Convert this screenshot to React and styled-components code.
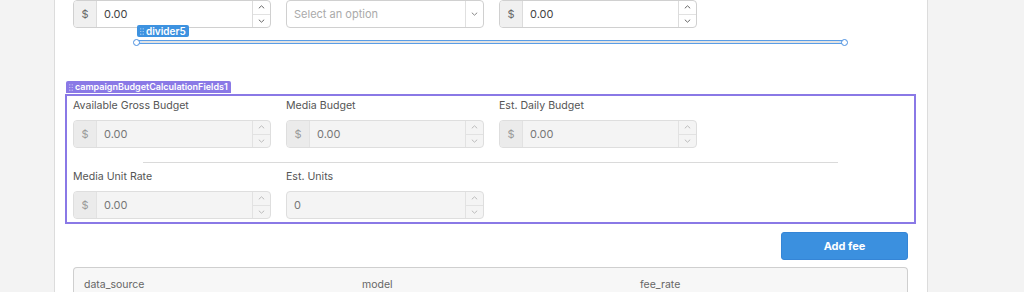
import React from 'react';
import styled, { createGlobalStyle } from 'styled-components';

const GlobalStyle = createGlobalStyle`
  html, body {
    margin: 0;
    padding: 0;
    background: #f3f3f3;
    font-family: Inter, "Noto Sans", sans-serif;
    overflow: hidden;
  }
`;

const Page = styled.div`
  display: flex;
  height: 292px;
  overflow: hidden;
`;

const Gutter = styled.div`
  width: 54px;
  flex-shrink: 0;
  background: #f3f3f3;
`;

const Canvas = styled.div`
  width: 872px;
  flex-shrink: 0;
  background: #fff;
  border-left: 1px solid #dcdcdc;
  border-right: 1px solid #dcdcdc;
  display: flex;
  flex-direction: column;
`;

const FieldRow = styled.div`
  display: grid;
  grid-template-columns: repeat(3, 198px);
  column-gap: 15px;
  margin-top: ${({ $top }) => $top || 0}px;
  padding-left: ${({ $indent }) => $indent || 0}px;
`;

const Field = styled.div`
  display: flex;
  flex-direction: column;
`;

const Label = styled.div`
  font-size: 10.6px;
  line-height: 14px;
  color: #555;
  margin-bottom: 7px;
  white-space: nowrap;
`;

const InputBox = styled.div`
  height: 28px;
  box-sizing: border-box;
  display: flex;
  border: 1px solid ${({ $disabled }) => ($disabled ? '#dedede' : '#d0d0d0')};
  border-radius: 4px;
  background: ${({ $disabled }) => ($disabled ? '#f4f4f4' : '#fff')};
  overflow: hidden;
`;

const Prefix = styled.div`
  width: 22px;
  flex-shrink: 0;
  display: flex;
  align-items: center;
  justify-content: center;
  background: ${({ $disabled }) => ($disabled ? '#ebebeb' : '#f0f0f0')};
  border-right: 1px solid ${({ $disabled }) => ($disabled ? '#e2e2e2' : '#dcdcdc')};
  font-size: 11px;
  color: ${({ $disabled }) => ($disabled ? '#999' : '#666')};
`;

const Value = styled.div`
  flex: 1;
  display: flex;
  align-items: center;
  padding-left: ${({ $pad }) => $pad || 7}px;
  font-size: 11px;
  color: ${({ $placeholder, $disabled }) =>
    $placeholder ? '#aaa' : $disabled ? '#777' : '#444'};
  white-space: nowrap;
`;

const Stepper = styled.div`
  width: 17px;
  flex-shrink: 0;
  display: flex;
  flex-direction: column;
  border-left: 1px solid ${({ $disabled }) => ($disabled ? '#e2e2e2' : '#dcdcdc')};
`;

const StepHalf = styled.div`
  flex: 1;
  display: flex;
  align-items: center;
  justify-content: center;
  & + & {
    border-top: 1px solid ${({ $disabled }) => ($disabled ? '#e2e2e2' : '#dcdcdc')};
  }
`;

const SelectArrow = styled.div`
  width: 17px;
  flex-shrink: 0;
  display: flex;
  align-items: center;
  justify-content: center;
  border-left: 1px solid #e0e0e0;
`;

const Chevron = ({ up, color }) => (
  <svg width="7" height="4" viewBox="0 0 7 4">
    <path
      d={up ? 'M0.8 3.3 L3.5 0.8 L6.2 3.3' : 'M0.8 0.7 L3.5 3.2 L6.2 0.7'}
      fill="none"
      stroke={color}
      strokeWidth="1"
    />
  </svg>
);

const NumberInput = ({ value, prefix = true, disabled }) => {
  const c = disabled ? '#bbb' : '#666';
  return (
    <InputBox $disabled={disabled}>
      {prefix && <Prefix $disabled={disabled}>$</Prefix>}
      <Value $disabled={disabled}>{value}</Value>
      <Stepper $disabled={disabled}>
        <StepHalf $disabled={disabled}>
          <Chevron up color={c} />
        </StepHalf>
        <StepHalf $disabled={disabled}>
          <Chevron color={c} />
        </StepHalf>
      </Stepper>
    </InputBox>
  );
};

const SelectInput = ({ placeholder }) => (
  <InputBox>
    <Value $placeholder $pad={7}>{placeholder}</Value>
    <SelectArrow>
      <Chevron color="#888" />
    </SelectArrow>
  </InputBox>
);

const DividerSelection = styled.div`
  position: relative;
  margin: 12px 0 0 80px;
  width: 711px;
  height: 8px;
  box-sizing: border-box;
  border: 1px solid #5a9de6;
  box-shadow: inset 0 0 0 1px #cfe2f7;
  display: flex;
  align-items: center;
  padding: 0 6px;
`;

const DividerLine = styled.div`
  flex: 1;
  height: 2px;
  background: #e2e2e2;
`;

const Handle = styled.div`
  position: absolute;
  top: 50%;
  ${({ $side }) => ($side === 'left' ? 'left: -3px;' : 'right: -3px;')}
  width: 5px;
  height: 5px;
  margin-top: -3.5px;
  border: 1px solid #4a8fe0;
  border-radius: 50%;
  background: #fff;
`;

const Badge = styled.div`
  position: absolute;
  left: ${({ $left }) => $left || 0}px;
  top: ${({ $top }) => $top}px;
  height: 12px;
  display: flex;
  align-items: center;
  gap: 2px;
  padding: 0 3px 0 3px;
  border-radius: ${({ $round }) => ($round ? '2px' : '2px 2px 0 0')};
  background: ${({ $color }) => $color};
  color: #fff;
  font-size: ${({ $size }) => $size || 9}px;
  font-weight: 600;
  line-height: 12px;
  white-space: nowrap;
`;

const Grip = () => (
  <svg width="4" height="7" viewBox="0 0 4 7">
    {[0.8, 3.2].map((x) =>
      [0.8, 3.5, 6.2].map((y) => (
        <circle key={`${x}-${y}`} cx={x} cy={y} r="0.6" fill="rgba(255,255,255,0.7)" />
      ))
    )}
  </svg>
);

const Group = styled.div`
  position: relative;
  margin: 50px 11px 0 10px;
  border: 2px solid #8a79e6;
  padding: 3px 0 3px 6px;
`;

const InnerDivider = styled.div`
  height: 1px;
  background: #dadada;
  margin: 14px 0 7px 70px;
  width: 695px;
`;

const SectionLine = styled.div`
  height: 2px;
  background: #e6e6e6;
  margin: 3px 0 0 18px;
  width: 765px;
`;

const ActionBar = styled.div`
  display: flex;
  justify-content: flex-end;
  padding-right: 19px;
  margin-top: 5px;
`;

const Button = styled.button`
  width: 127px;
  height: 28px;
  border: 1px solid #3585d6;
  border-radius: 3px;
  background: #3b90df;
  color: #fff;
  font-family: Inter, "Noto Sans", sans-serif;
  font-size: 11px;
  font-weight: 700;
  cursor: pointer;
`;

const Table = styled.div`
  margin: 7px 19px 0 18px;
  border: 1px solid #cfcfcf;
  border-bottom: none;
  border-radius: 4px 4px 0 0;
  background: #f7f7f7;
  height: 40px;
`;

const HeaderRow = styled.div`
  display: grid;
  grid-template-columns: 278px 278px 1fr;
  padding: 10px 0 0 10px;
`;

const HeaderCell = styled.div`
  font-size: 10.5px;
  color: #666;
  line-height: 14px;
`;

export default function App() {
  return (
    <>
      <GlobalStyle />
      <Page>
        <Gutter />
        <Canvas>
          <FieldRow $top={0} $indent={18}>
            <NumberInput value="0.00" />
            <SelectInput placeholder="Select an option" />
            <NumberInput value="0.00" />
          </FieldRow>

          <DividerSelection>
            <Badge $color="#3d92e0" $top={-16} $left={1} $size={10} $round>
              <Grip />
              divider5
            </Badge>
            <Handle $side="left" />
            <DividerLine />
            <Handle $side="right" />
          </DividerSelection>

          <Group>
            <Badge $color="#8a79e6" $top={-15} $left={-1}>
              <Grip />
              campaignBudgetCalculationFields1
            </Badge>
            <FieldRow>
              <Field>
                <Label>Available Gross Budget</Label>
                <NumberInput value="0.00" disabled />
              </Field>
              <Field>
                <Label>Media Budget</Label>
                <NumberInput value="0.00" disabled />
              </Field>
              <Field>
                <Label>Est. Daily Budget</Label>
                <NumberInput value="0.00" disabled />
              </Field>
            </FieldRow>
            <InnerDivider />
            <FieldRow>
              <Field>
                <Label>Media Unit Rate</Label>
                <NumberInput value="0.00" disabled />
              </Field>
              <Field>
                <Label>Est. Units</Label>
                <NumberInput value="0" prefix={false} disabled />
              </Field>
            </FieldRow>
          </Group>

          <SectionLine />

          <ActionBar>
            <Button>Add fee</Button>
          </ActionBar>

          <Table>
            <HeaderRow>
              <HeaderCell>data_source</HeaderCell>
              <HeaderCell>model</HeaderCell>
              <HeaderCell>fee_rate</HeaderCell>
            </HeaderRow>
          </Table>
        </Canvas>
        <Gutter />
      </Page>
    </>
  );
}
